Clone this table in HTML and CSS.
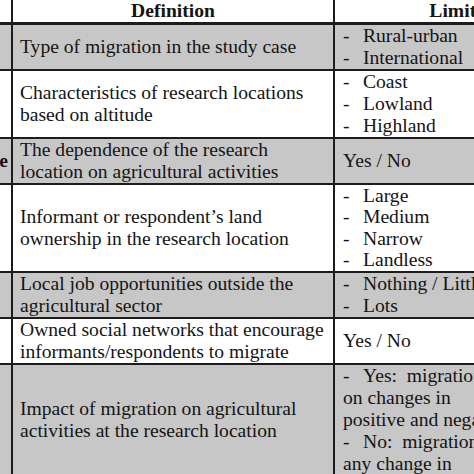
FILE: index.html
```html
<!DOCTYPE html>
<html lang="en">
<head>
<meta charset="utf-8">
<title>Migration variables</title>
<link rel="stylesheet" href="styles.css">
</head>
<body>
<table class="grid">
  <colgroup>
    <col class="c-var">
    <col class="c-def">
    <col class="c-lim">
  </colgroup>
  <thead>
    <tr>
      <th class="var"></th>
      <th>Definition</th>
      <th>Limitation</th>
    </tr>
  </thead>
  <tbody>
    <tr class="shade">
      <td class="var">Migration Type</td>
      <td class="def">Type of migration in the study case</td>
      <td class="lim">
        <div class="item"><span class="dash">-</span>Rural-urban</div>
        <div class="item"><span class="dash">-</span>International</div>
      </td>
    </tr>
    <tr>
      <td class="var">Topography</td>
      <td class="def">Characteristics of research locations based on altitude</td>
      <td class="lim">
        <div class="item"><span class="dash">-</span>Coast</div>
        <div class="item"><span class="dash">-</span>Lowland</div>
        <div class="item"><span class="dash">-</span>Highland</div>
      </td>
    </tr>
    <tr class="shade">
      <td class="var edge">Agricultural Dependence</td>
      <td class="def">The dependence of the research location on agricultural activities</td>
      <td class="lim">Yes / No</td>
    </tr>
    <tr>
      <td class="var">Land Ownership</td>
      <td class="def">Informant or respondent’s land ownership in the research location</td>
      <td class="lim tight">
        <div class="item"><span class="dash">-</span>Large</div>
        <div class="item"><span class="dash">-</span>Medium</div>
        <div class="item"><span class="dash">-</span>Narrow</div>
        <div class="item"><span class="dash">-</span>Landless</div>
      </td>
    </tr>
    <tr class="shade">
      <td class="var">Job Opportunity</td>
      <td class="def">Local job opportunities outside the agricultural sector</td>
      <td class="lim">
        <div class="item"><span class="dash">-</span>Nothing / Little</div>
        <div class="item"><span class="dash">-</span>Lots</div>
      </td>
    </tr>
    <tr>
      <td class="var">Social Network</td>
      <td class="def">Owned social networks that encourage informants/respondents to migrate</td>
      <td class="lim">Yes / No</td>
    </tr>
    <tr class="shade">
      <td class="var">Migration Impact</td>
      <td class="def">Impact of migration on agricultural activities at the research location</td>
      <td class="lim">
        <div class="item"><span class="dash">-</span>Yes:&nbsp; migration has an impact</div>
        <div class="line">on changes in <span class="spread">agricultural activities,</span></div>
        <div class="line">positive and negative</div>
        <div class="item"><span class="dash">-</span>No:&nbsp; migration does not have</div>
        <div class="line">any change in <span class="spread">agricultural activities</span></div>
      </td>
    </tr>
  </tbody>
</table>
</body>
</html>
```
FILE: styles.css
```css
html, body {
  margin: 0;
  padding: 0;
  background: #ffffff;
  overflow: hidden;
}

.grid {
  border-collapse: collapse;
  table-layout: fixed;
  width: 862px;
  margin-left: -249px;
  font-family: "Liberation Serif", "Times New Roman", serif;
  font-size: 19.6px;
  line-height: 22px;
  color: #141414;
}

.c-var { width: 260px; }
.c-def { width: 322px; }
.c-lim { width: 280px; }

.grid th,
.grid td {
  border: 2px solid #1c1c1c;
  padding: 0 8px;
  vertical-align: middle;
  text-align: left;
}

.grid th {
  border-top: none;
  border-bottom-width: 3px;
  font-weight: bold;
  text-align: center;
  height: 22px;
}

.grid .shade td {
  background: #c7c7c7;
}

.grid td.var {
  font-weight: bold;
  text-align: center;
  white-space: nowrap;
}

.grid td.edge {
  text-align: right;
  padding-right: 3px;
}

.grid td.def {
  padding-left: 7px;
  padding-right: 2px;
}

.grid td.tight {
  line-height: 21.4px;
}

.item,
.line {
  white-space: nowrap;
}

.dash {
  display: inline-block;
  width: 20px;
}

.spread {
  padding-left: 40px;
}
```
